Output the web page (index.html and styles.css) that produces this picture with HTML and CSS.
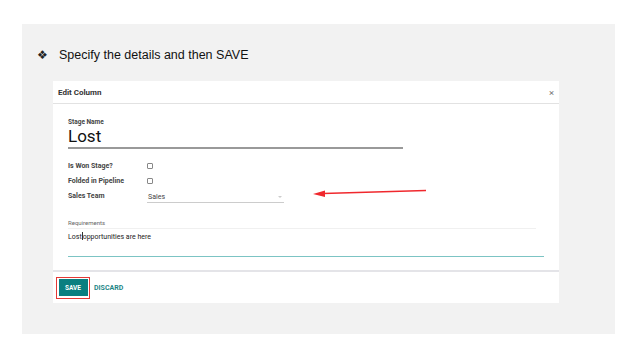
FILE: index.html
```html
<!DOCTYPE html>
<html>
<head>
<meta charset="utf-8">
<link rel="stylesheet" href="styles.css">
</head>
<body>
<div class="slide">
  <div class="title"><span class="bullet">&#10070;</span><span>Specify the details and then SAVE</span></div>
  <div class="dialog">
    <div class="dlg-head">
      <span class="dlg-title">Edit Column</span>
      <span class="close">&times;</span>
    </div>
    <div class="dlg-body">
      <div class="lbl-small">Stage Name</div>
      <div class="stage-name">Lost</div>
      <div class="rows">
        <div class="row"><span class="lbl">Is Won Stage?</span><span class="cb"></span></div>
        <div class="row"><span class="lbl">Folded in Pipeline</span><span class="cb"></span></div>
        <div class="row"><span class="lbl">Sales Team</span><span class="select"><span>Sales</span><span class="caret"></span></span></div>
      </div>
      <div class="req-label">Requirements</div>
      <div class="req-text">Lost<span class="cursor"></span>opportunities are here</div>
    </div>
    <div class="dlg-foot">
      <span class="save-wrap"><span class="save">SAVE</span></span>
      <span class="discard">DISCARD</span>
    </div>
    <svg class="arrow" width="114" height="10" viewBox="0 0 114 10">
      <line x1="10" y1="5.5" x2="113" y2="2.5" stroke="#f0282d" stroke-width="1.3"/>
      <polygon points="0,6 12,2.5 12,9" fill="#f0282d"/>
    </svg>
  </div>
</div>
</body>
</html>
```
FILE: styles.css
```css
* { box-sizing: border-box; }
html, body { margin: 0; padding: 0; background: #fff; }
body { width: 638px; height: 359px; overflow: hidden; }
.slide {
  margin: 24px 23px 0 22px;
  height: 310px;
  background: #f2f2f2;
  padding: 22px 0 0 15px;
}
.title {
  display: flex;
  align-items: center;
  font-family: "Liberation Sans", Arial, sans-serif;
  font-size: 12.5px;
  color: #111;
  height: 18px;
}
.bullet { font-size: 12px; width: 22px; font-family: "DejaVu Sans", sans-serif; color: #222; }
.dialog {
  position: relative;
  margin: 17px 0 0 16px;
  width: 506px;
  background: #fff;
  font-family: Roboto, "Liberation Sans", sans-serif;
  color: #333;
}
.dlg-head {
  height: 23px;
  border-bottom: 1px solid #e2e2e2;
  display: flex;
  align-items: center;
  justify-content: space-between;
  padding: 0 5px 0 5px;
}
.dlg-title { font-size: 8px; font-weight: 700; color: #333; }
.close { font-size: 9.5px; color: #777; }
.dlg-body { padding: 14px 15px 13px 15px; border-bottom: 2px solid #e4e4e8; }
.lbl-small { font-size: 6.5px; font-weight: 700; color: #444; }
.stage-name {
  width: 335px;
  font-size: 17px;
  color: #111;
  line-height: 20px;
  border-bottom: 2px solid #999;
  padding-bottom: 1px;
}
.rows { margin-top: 9px; display: flex; flex-direction: column; }
.row { display: flex; align-items: center; height: 15px; }
.lbl { width: 79px; font-size: 7px; font-weight: 700; color: #444; }
.cb { width: 6px; height: 6px; border: 1px solid #888; border-radius: 1px; }
.select {
  width: 137px;
  display: flex;
  justify-content: space-between;
  align-items: center;
  font-size: 7px;
  color: #444;
  border-bottom: 1px solid #ccc;
  height: 11px;
  padding: 0 2px 0 1px;
  margin-top: 3px;
}
.caret { width: 0; height: 0; border-left: 2px solid transparent; border-right: 2px solid transparent; border-top: 2px solid #ccc; }
.req-label {
  margin-top: 16px;
  font-size: 6px;
  color: #666;
  border-bottom: 1px solid #f0f0f0;
  width: 468px;
  padding-bottom: 2px;
}
.req-text {
  font-size: 7px;
  color: #222;
  padding-top: 3px;
  height: 28px;
  width: 476px;
  border-bottom: 1.5px solid #7cc4c4;
}
.cursor { display: inline-block; width: 1px; height: 8px; background: #333; vertical-align: -1px; }
.dlg-foot { height: 31px; display: flex; align-items: center; padding-left: 3px; gap: 4px; }
.save-wrap { border: 1.5px solid #e53935; padding: 1.5px; display: flex; }
.save {
  background: #0a7f80;
  color: #fff;
  font-size: 6.5px;
  font-weight: 700;
  width: 29px;
  height: 17px;
  display: flex;
  align-items: center;
  justify-content: center;
}
.discard { font-size: 7px; font-weight: 700; color: #1d8686; }
.arrow { position: absolute; left: 260px; top: 107px; }
```
